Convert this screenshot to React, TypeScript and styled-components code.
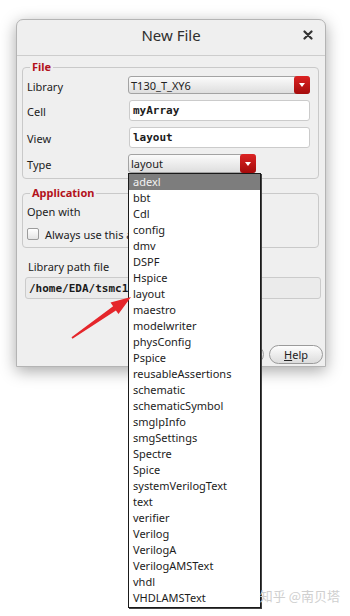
import styled, { createGlobalStyle } from 'styled-components';

const GlobalStyle = createGlobalStyle`
  html, body {
    margin: 0;
    padding: 0;
    background: #fff;
  }
  body {
    font-family: "Noto Sans", "DejaVu Sans", sans-serif;
    color: #222;
  }
`;

const Page = styled.div`
  position: relative;
  width: 350px;
  height: 616px;
  overflow: hidden;
  box-sizing: border-box;
  padding: 19px 0 0 16px;
  background: #fff;
`;

const Dialog = styled.div`
  width: 310px;
  height: 348px;
  box-sizing: border-box;
  display: flex;
  flex-direction: column;
  background: #efefef;
  border: 1px solid #b4b4b4;
  border-radius: 7px 7px 0 0;
  box-shadow: 0 4px 16px rgba(0, 0, 0, 0.35);
`;

const TitleBar = styled.div`
  height: 36px;
  box-sizing: border-box;
  padding-bottom: 5px;
  display: grid;
  grid-template-columns: 36px 1fr 36px;
  align-items: center;
  border-bottom: 1px solid #cdcdcd;
`;

const Title = styled.div`
  grid-column: 2;
  text-align: center;
  font-size: 15px;
  color: #2e2e2e;
`;

const Close = styled.div`
  display: flex;
  justify-content: center;
  align-items: center;
  padding-left: 2px;
`;

const Body = styled.div`
  flex: 1;
  display: flex;
  flex-direction: column;
  padding: 4px 6px 0 5px;
`;

const Group = styled.fieldset<{ $gap?: number }>`
  margin: ${(p) => p.$gap ?? 0}px 0 0 0;
  padding: 2px 8px 5px 4px;
  border: 1px solid #c9c9c9;
  border-radius: 4px;
  min-width: 0;
`;

const Legend = styled.legend`
  margin-left: 3px;
  padding: 0 2px;
  font-size: 11px;
  font-weight: 700;
  line-height: 14px;
  color: #b3121b;
`;

const Form = styled.div`
  display: grid;
  grid-template-columns: 101px 1fr;
  row-gap: 6px;
`;

const Label = styled.div`
  font-size: 11px;
  line-height: 14px;
  align-self: center;
  padding-top: 3px;
`;

const ComboWrap = styled.div<{ $width?: number }>`
  position: relative;
  width: ${(p) => (p.$width ? `${p.$width}px` : 'auto')};
`;

const Combo = styled.div<{ $h: number }>`
  height: ${(p) => p.$h}px;
  box-sizing: border-box;
  display: flex;
  align-items: stretch;
  border: 1px solid #a3a3a3;
  border-radius: 3px;
  background: linear-gradient(#fbfbfb, #dedede);
`;

const ComboText = styled.div`
  flex: 1;
  padding-left: 2px;
  font-size: 11px;
  display: flex;
  align-items: center;
`;

const DropButton = styled.div`
  width: 16px;
  margin: -1px -1px -1px 0;
  border-radius: 3px;
  background: linear-gradient(#dc2323, #a40b0b);
  display: flex;
  align-items: center;
  justify-content: center;
  &::after {
    content: '';
    border-left: 3px solid transparent;
    border-right: 3px solid transparent;
    border-top: 4px solid #fff;
  }
`;

const TextInput = styled.div<{ $bg?: string; $h?: number }>`
  height: ${(p) => p.$h ?? 21}px;
  box-sizing: border-box;
  margin-left: 1px;
  padding-left: 3px;
  display: flex;
  align-items: center;
  border: 1px solid #cbcbcb;
  border-radius: 3px;
  background: ${(p) => p.$bg ?? '#fff'};
  font-family: "DejaVu Sans Mono", "Liberation Mono", monospace;
  font-weight: 700;
  font-size: 11px;
  color: #1b1b1b;
  white-space: nowrap;
  overflow: hidden;
`;

const List = styled.div`
  position: absolute;
  top: 100%;
  left: 0;
  width: 133px;
  box-sizing: border-box;
  padding: 0 0 1px;
  background: #fff;
  border: 1px solid #1a1a1a;
  box-shadow: 1px 1px 0 #444;
  z-index: 5;
`;

const Item = styled.div<{ $active?: boolean }>`
  height: 16px;
  line-height: 16px;
  padding-left: 4px;
  font-size: 11px;
  color: ${(p) => (p.$active ? '#f2f2f2' : '#1c1c1c')};
  background: ${(p) => (p.$active ? '#7d7d7d' : 'transparent')};
  white-space: nowrap;
`;

const Row = styled.div`
  font-size: 11px;
  height: 18px;
  display: flex;
  align-items: center;
`;

const CheckRow = styled.label`
  margin-top: 6px;
  height: 16px;
  display: flex;
  align-items: center;
  gap: 6px;
  font-size: 11px;
  white-space: nowrap;
`;

const Checkbox = styled.span`
  width: 12px;
  height: 12px;
  box-sizing: border-box;
  border: 1px solid #9c9c9c;
  border-radius: 2px;
  background: linear-gradient(#fff, #e4e4e4);
`;

const PathLabel = styled.div`
  margin: 12px 0 0 6px;
  font-size: 11px;
  line-height: 14px;
`;

const PathBox = styled.div`
  margin: 3px -2px 0 2px;
`;

const Spacer = styled.div`
  flex: 1;
`;

const ButtonRow = styled.div`
  display: flex;
  justify-content: flex-end;
  gap: 5px;
  margin: 0 -4px 2px 0;
`;

const Button = styled.button`
  width: 54px;
  height: 19px;
  padding: 0;
  border: 1px solid #9a9a9a;
  border-radius: 10px;
  background: linear-gradient(#fdfdfd, #dcdcdc);
  font-family: "Noto Sans", sans-serif;
  font-size: 11px;
  color: #222;
`;

const ArrowLayer = styled.svg`
  position: absolute;
  left: 0;
  top: 0;
  z-index: 10;
  pointer-events: none;
`;

const Watermark = styled.div`
  position: absolute;
  right: 10px;
  top: 586px;
  z-index: 10;
  font-family: "Noto Sans CJK SC", "Noto Sans", sans-serif;
  font-size: 13px;
  color: #cfcfcf;
  white-space: nowrap;
`;

const viewTypes = [
  'adexl', 'bbt', 'Cdl', 'config', 'dmv', 'DSPF', 'Hspice', 'layout', 'maestro',
  'modelwriter', 'physConfig', 'Pspice', 'reusableAssertions', 'schematic',
  'schematicSymbol', 'smglpInfo', 'smgSettings', 'Spectre', 'Spice',
  'systemVerilogText', 'text', 'verifier', 'Verilog', 'VerilogA',
  'VerilogAMSText', 'vhdl', 'VHDLAMSText',
];

function App() {
  return (
    <Page>
      <GlobalStyle />
      <Dialog>
        <TitleBar>
          <Title>New File</Title>
          <Close>
            <svg width="10" height="10" viewBox="0 0 10 10">
              <path d="M1.5 1.5 L8.5 8.5 M8.5 1.5 L1.5 8.5" stroke="#333" strokeWidth="2.2" strokeLinecap="round" />
            </svg>
          </Close>
        </TitleBar>
        <Body>
          <Group>
            <Legend>File</Legend>
            <Form>
              <Label>Library</Label>
              <ComboWrap>
                <Combo $h={18}>
                  <ComboText>T130_T_XY6</ComboText>
                  <DropButton />
                </Combo>
              </ComboWrap>
              <Label>Cell</Label>
              <TextInput>myArray</TextInput>
              <Label>View</Label>
              <TextInput>layout</TextInput>
              <Label>Type</Label>
              <ComboWrap $width={128}>
                <Combo $h={19}>
                  <ComboText>layout</ComboText>
                  <DropButton />
                </Combo>
                <List>
                  {viewTypes.map((t, i) => (
                    <Item key={t} $active={i === 0}>{t}</Item>
                  ))}
                </List>
              </ComboWrap>
            </Form>
          </Group>
          <Group $gap={7}>
            <Legend>Application</Legend>
            <Row>Open with</Row>
            <CheckRow>
              <Checkbox />
              Always use this application for this file
            </CheckRow>
          </Group>
          <PathLabel>Library path file</PathLabel>
          <PathBox>
            <TextInput $bg="#ebebeb" $h={22}>/home/EDA/tsmc18/cds.lib</TextInput>
          </PathBox>
          <Spacer />
          <ButtonRow>
            <Button>OK</Button>
            <Button>Cancel</Button>
            <Button><u>H</u>elp</Button>
          </ButtonRow>
        </Body>
      </Dialog>
      <ArrowLayer width="350" height="616" viewBox="0 0 350 616">
        <polygon
          points="131,297 118.5,314.1 115.9,310.4 72.5,338.7 71.5,337.3 113.1,306.2 110.5,302.5"
          fill="#e5262b"
        />
      </ArrowLayer>
      <Watermark>知乎 @南贝塔</Watermark>
    </Page>
  );
}

export default App;
